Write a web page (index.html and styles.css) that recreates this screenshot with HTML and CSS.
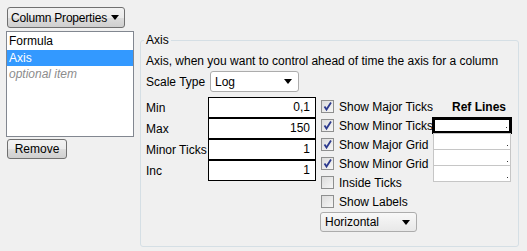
FILE: index.html
```html
<!DOCTYPE html>
<html lang="en">
<head>
    <meta charset="UTF-8">
    <title>Column Properties</title>
    <link rel="stylesheet" href="styles.css">
</head>
<body>
    <div id="page">
        <div class="toolbar">
            <span class="btn drop">Column Properties <i class="arrow"></i></span>
        </div>
        <div id="main">
            <div id="side">
                <ul class="list">
                    <li>Formula</li>
                    <li class="selected">Axis</li>
                    <li class="optional">optional item</li>
                </ul>
                <span class="btn remove">Remove</span>
            </div>
            <fieldset id="axis">
                <legend>Axis</legend>
                <div class="desc">Axis, when you want to control ahead of time the axis for a column</div>
                <div class="scale">
                    <span class="scale-label">Scale Type</span>
                    <span class="select log">Log <i class="arrow"></i></span>
                </div>
                <div class="cols">
                    <div class="fields">
                        <div class="field"><span class="flabel">Min</span><span class="box">0,1</span></div>
                        <div class="field"><span class="flabel">Max</span><span class="box">150</span></div>
                        <div class="field"><span class="flabel">Minor Ticks</span><span class="box">1</span></div>
                        <div class="field"><span class="flabel">Inc</span><span class="box">1</span></div>
                    </div>
                    <div class="checks">
                        <div class="check"><span class="cb on"><svg width="13" height="13" viewBox="0 0 13 13"><path d="M3.5 6.5 L5.5 9.5 L10 2.5" /></svg></span>Show Major Ticks</div>
                        <div class="check"><span class="cb on"><svg width="13" height="13" viewBox="0 0 13 13"><path d="M3.5 6.5 L5.5 9.5 L10 2.5" /></svg></span>Show Minor Ticks</div>
                        <div class="check"><span class="cb on"><svg width="13" height="13" viewBox="0 0 13 13"><path d="M3.5 6.5 L5.5 9.5 L10 2.5" /></svg></span>Show Major Grid</div>
                        <div class="check"><span class="cb on"><svg width="13" height="13" viewBox="0 0 13 13"><path d="M3.5 6.5 L5.5 9.5 L10 2.5" /></svg></span>Show Minor Grid</div>
                        <div class="check"><span class="cb"></span>Inside Ticks</div>
                        <div class="check"><span class="cb"></span>Show Labels</div>
                        <span class="select horiz">Horizontal <i class="arrow"></i></span>
                    </div>
                    <div class="reflines">
                        <div class="ref-head">Ref Lines</div>
                        <div class="ref current"><i class="dot"></i></div>
                        <div class="ref"><i class="dot"></i></div>
                        <div class="ref"><i class="dot"></i></div>
                        <div class="ref"><i class="dot"></i></div>
                    </div>
                </div>
            </fieldset>
        </div>
    </div>
</body>
</html>
```
FILE: styles.css
```css
*{
    margin: 0;
    padding: 0;
    box-sizing: border-box;
}
ul{
    list-style: none;
}
body{
    background: #f0f0f0;
    font-family: "Liberation Sans", Arial, sans-serif;
    font-size: 12px;
    color: #000;
    width: 527px;
    height: 251px;
    overflow: hidden;
}
#page{
    padding: 7px 8px 0 6px;
}
.toolbar{
    height: 24px;
    padding-left: 1px;
}
.btn{
    display: inline-flex;
    align-items: center;
    height: 21px;
    border: 1px solid #707070;
    border-radius: 3px;
    background: linear-gradient(#f2f2f2 0%, #ebebeb 50%, #dddddd 51%, #cfcfcf 100%);
    padding: 0 4px;
    white-space: nowrap;
}
.drop{
    width: 118px;
    padding: 0 5px 0 3px;
    letter-spacing: -0.2px;
}
.arrow{
    display: inline-block;
    width: 0;
    height: 0;
    border-left: 4px solid transparent;
    border-right: 4px solid transparent;
    border-top: 5px solid #000;
    margin-left: auto;
}
#main{
    display: flex;
    align-items: flex-start;
}
#side{
    width: 129px;
}
.list{
    height: 106px;
    background: #fff;
    border: 1px solid #828790;
    padding-top: 1px;
}
.list li{
    height: 16.5px;
    line-height: 16px;
    padding-left: 2px;
}
.list .selected{
    background: #3399ff;
    color: #fff;
}
.list .optional{
    color: #8c8c8c;
    font-style: italic;
}
.remove{
    width: 60px;
    height: 20px;
    margin: 2px 0 0 1px;
    justify-content: center;
}
#axis{
    width: 379px;
    margin: 2px 0 0 6px;
    border: 1px solid #d5dfe5;
    border-radius: 3px;
    padding: 0 7px 14px 5px;
}
#axis legend{
    padding: 0 2px;
    margin-left: -2px;
    line-height: 14px;
}
.desc{
    height: 20px;
    line-height: 20px;
    margin-top: 4px;
}
.scale{
    display: flex;
    align-items: center;
    height: 21px;
}
.scale-label{
    width: 64px;
}
.select{
    display: inline-flex;
    align-items: center;
    height: 21px;
    border: 1px solid #acacac;
    border-radius: 3px;
    background: linear-gradient(#f8f8f8, #e8e8e8);
    padding: 0 6px 0 4px;
}
.log{
    width: 89px;
    background: #fff;
}
.cols{
    display: flex;
    margin-top: 5px;
}
.fields{
    width: 170px;
}
.field{
    display: flex;
    align-items: center;
    height: 21px;
}
.flabel{
    width: 62px;
    white-space: nowrap;
}
.box{
    width: 108px;
    height: 21px;
    border: 1px solid #000;
    background: #fff;
    text-align: right;
    line-height: 19px;
    padding-right: 5px;
}
.checks{
    width: 112px;
    margin-left: 5px;
}
.check{
    display: flex;
    align-items: center;
    height: 19px;
    white-space: nowrap;
}
.cb{
    width: 13px;
    height: 13px;
    border: 1px solid #8e8f8f;
    background: linear-gradient(135deg, #dcdcdc, #f6f6f6);
    margin-right: 5px;
    position: relative;
}
.cb svg{
    position: absolute;
    left: -1px;
    top: -1px;
}
.cb path{
    fill: none;
    stroke: #2c3a8e;
    stroke-width: 1.8;
}
.horiz{
    width: 97px;
    height: 20px;
    margin-top: 1px;
    margin-left: -1px;
}
.reflines{
    width: 78px;
}
.ref-head{
    height: 20px;
    line-height: 20px;
    font-weight: bold;
    text-align: right;
    padding-right: 5px;
}
.ref{
    height: 17px;
    background: #fff;
    border: 1px solid #c6c6c6;
    margin-top: -1px;
    position: relative;
}
.ref.current{
    height: 17px;
    margin: 0 -1px 0 -1px;
    border: 3px solid #000;
}
.dot{
    position: absolute;
    right: 2px;
    bottom: 3px;
    width: 1px;
    height: 1px;
    background: #333;
}
```
